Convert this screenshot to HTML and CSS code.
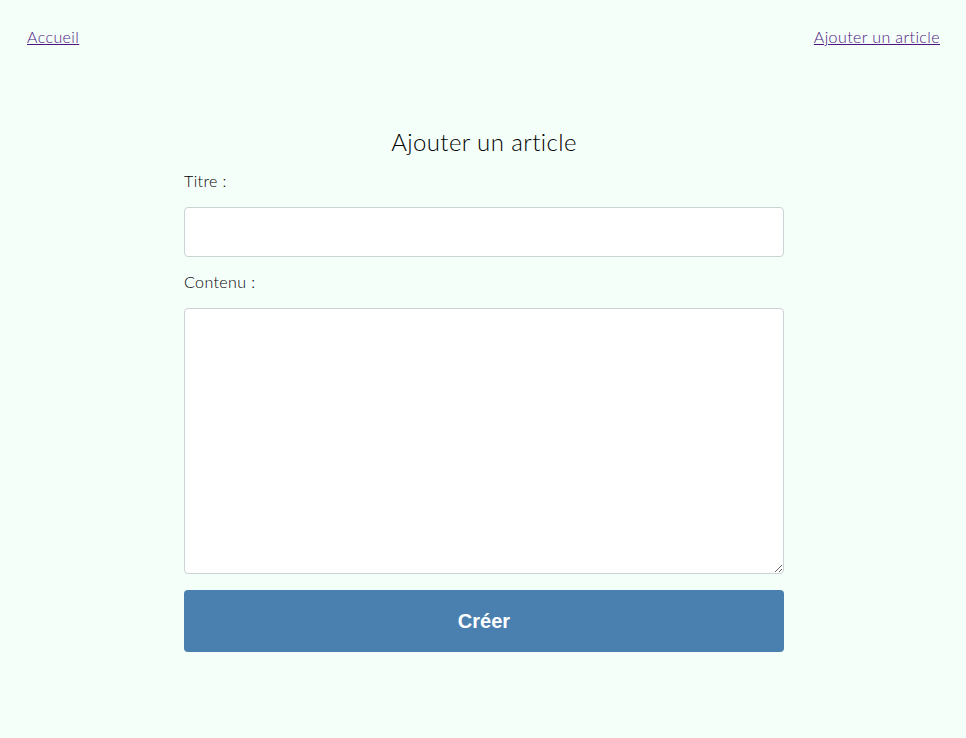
FILE: index.html
```html
<!DOCTYPE html>
<html lang="fr">
<head>
<meta charset="utf-8">
<title>Ajouter un article</title>
<link rel="stylesheet" href="styles.css">
</head>
<body>
<nav class="nav">
  <a href="#" class="nav-link">Accueil</a>
  <a href="#" class="nav-link">Ajouter un article</a>
</nav>
<main class="main">
  <h1 class="title">Ajouter un article</h1>
  <form class="form">
    <label class="label label-first" for="titre">Titre :</label>
    <input class="input" type="text" id="titre">
    <label class="label" for="contenu">Contenu :</label>
    <textarea class="textarea" id="contenu"></textarea>
    <button class="button" type="button">Créer</button>
  </form>
</main>
</body>
</html>
```

FILE: styles.css
```css
html, body {
  margin: 0;
  padding: 0;
}

body {
  background: #f5fffa;
  font-family: "Lato", "Open Sans", sans-serif;
  font-weight: 300;
  letter-spacing: 0.4px;
  color: #000;
  min-height: 738px;
}

.nav {
  display: flex;
  justify-content: space-between;
  padding: 27px 26px 0 27px;
}

.nav-link {
  color: #4b1680;
  font-size: 16px;
  line-height: 20px;
}

.main {
  width: 600px;
  margin-left: calc(50% - 299px);
  padding-top: 80px;
}

.title {
  margin: 0;
  text-align: center;
  font-weight: 300;
  font-size: 24px;
  line-height: 30px;
  color: #000;
}

.form {
  display: flex;
  flex-direction: column;
}

.label {
  font-size: 16px;
  line-height: 20px;
  margin-top: 10px;
  margin-bottom: 16px;
}

.label-first {
  margin-top: 14px;
}

.input {
  box-sizing: border-box;
  height: 50px;
  border: 1px solid #ccd3d6;
  border-radius: 4px;
  background: #fff;
  margin: 0 0 5px;
}

.textarea {
  box-sizing: border-box;
  height: 266px;
  border: 1px solid #ccd3d6;
  border-radius: 4px;
  background: #fff;
  resize: vertical;
  margin: 0;
}

.button {
  margin-top: 16px;
  height: 62px;
  border: none;
  border-radius: 4px;
  background: #4a80b0;
  color: #fff;
  font-family: "Liberation Sans", Arial, sans-serif;
  font-weight: 700;
  font-size: 20px;
  letter-spacing: 0;
}
```
